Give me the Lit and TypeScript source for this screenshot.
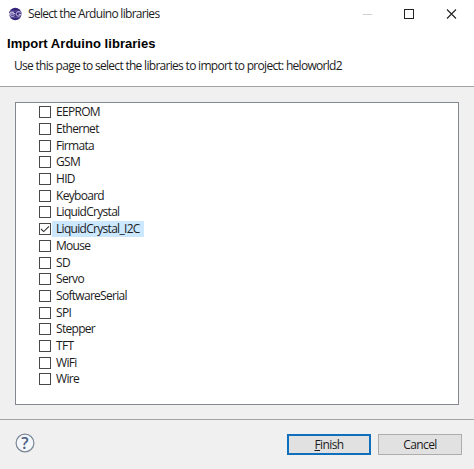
import { LitElement, css, html, svg } from 'lit';
import { customElement, property, state } from 'lit/decorators.js';
import { classMap } from 'lit/directives/class-map.js';

const LIBRARIES = [
  'EEPROM',
  'Ethernet',
  'Firmata',
  'GSM',
  'HID',
  'Keyboard',
  'LiquidCrystal',
  'LiquidCrystal_I2C',
  'Mouse',
  'SD',
  'Servo',
  'SoftwareSerial',
  'SPI',
  'Stepper',
  'TFT',
  'WiFi',
  'Wire',
];

@customElement('library-row')
export class LibraryRowEl extends LitElement {
  @property() name = '';

  @property({ type: Boolean }) checked = false;

  static override styles = css`
    :host {
      display: flex;
      align-items: center;
      height: 16.7px;
    }
    .box {
      box-sizing: border-box;
      flex: none;
      width: 12px;
      height: 12px;
      border: 1px solid #484848;
      background: #fff;
    }
    svg {
      display: block;
      width: 10px;
      height: 10px;
    }
    .name {
      height: 16px;
      margin-left: 1px;
      padding: 0 4px;
      line-height: 16px;
      white-space: nowrap;
    }
    .name.selected {
      background: #cce8ff;
    }
  `;

  override render() {
    return html`
      <span class="box">
        ${this.checked
          ? html`<svg viewBox="0 0 10 10">
              ${svg`<path d="M1 5 L3.7 7.6 L9 2.3" fill="none" stroke="#333" stroke-width="1.1" />`}
            </svg>`
          : ''}
      </span>
      <span class=${classMap({ name: true, selected: this.checked })}
        >${this.name}</span
      >
    `;
  }
}

@customElement('app-root')
export class AppRootEl extends LitElement {
  @state() private selected = 'LiquidCrystal_I2C';

  static override styles = css`
    :host {
      display: flex;
      flex-direction: column;
      box-sizing: border-box;
      width: 474px;
      height: 469px;
      overflow: hidden;
      background: #f0f0f0;
      color: #1c1c1c;
      font-family: 'Open Sans', 'Noto Sans', sans-serif;
      font-size: 12px;
      letter-spacing: -0.7px;
    }
    header {
      box-sizing: border-box;
      flex: none;
      height: 87px;
      background: #fff;
      border-bottom: 1px solid #a5a5a5;
    }
    .titlebar {
      display: flex;
      align-items: center;
      height: 28px;
      padding-left: 8px;
    }
    .logo {
      width: 14px;
      height: 14px;
    }
    .title {
      flex: 1;
      margin-left: 6px;
      line-height: 16px;
    }
    .controls {
      width: 114px;
      height: 28px;
    }
    h1 {
      margin: 8px 0 0 7px;
      font: bold 13px/16px 'Liberation Sans', Arial, sans-serif;
      letter-spacing: 0.04px;
      color: #000;
    }
    p {
      margin: 5px 0 0 14px;
      line-height: 18px;
    }
    .list {
      box-sizing: border-box;
      flex: none;
      height: 303px;
      margin: 15px 15px 14px;
      padding: 1px 0 0 23px;
      background: #fff;
      border: 1px solid #828790;
    }
    footer {
      display: flex;
      flex: 1;
      align-items: flex-start;
      padding: 14px 12px 0 15px;
      border-top: 1px solid #a5a5a5;
    }
    .help {
      width: 20px;
      height: 20px;
      margin: -1px auto 0 0;
    }
    .help text {
      font: 600 16px 'Open Sans', sans-serif;
      letter-spacing: 0;
    }
    button {
      box-sizing: border-box;
      width: 84px;
      height: 21px;
      margin-left: 7px;
      padding: 0;
      border: 1px solid #adadad;
      background: #e1e1e1;
      color: inherit;
      font: inherit;
      letter-spacing: -0.6px;
      line-height: 17px;
    }
    button.default {
      border: 2px solid #0f6fbd;
    }
  `;

  override render() {
    return html`
      <header>
        <div class="titlebar">
          <svg class="logo" viewBox="0 0 14 14">
            <circle cx="7.3" cy="7" r="6.2" fill="#35257a" />
            <path
              d="M2 4.2H12.6M2 10.2H12.6"
              stroke="#8d82bd"
              stroke-width=".6"
            />
            <path
              d="M6.6 8.6C5.6 9.7 1.5 9.6 1.5 7.1C1.5 4.5 6.4 4.5 6.4 7H2M12.8 5.4C11.6 4.4 8.1 4.5 8.1 7.1C8.1 9.6 12.6 9.7 12.8 7.3H10.6"
              fill="none"
              stroke="#e4def8"
              stroke-width="1"
            />
          </svg>
          <span class="title">Select the Arduino libraries</span>
          <svg class="controls" viewBox="0 0 114 28" fill="none">
            <path d="M3 14.5H12" stroke="#d0d0d0" />
            <rect x="44.5" y="9.5" width="9" height="9" stroke="#222" />
            <path
              d="M87 9.5L96 18.5M96 9.5L87 18.5"
              stroke="#222"
              stroke-width="1.1"
            />
          </svg>
        </div>
        <h1>Import Arduino libraries</h1>
        <p>Use this page to select the libraries to import to project: heloworld2</p>
      </header>
      <div class="list">
        ${LIBRARIES.map(
          (name) => html`
            <library-row
              .name=${name}
              .checked=${name === this.selected}
              @click=${() => (this.selected = name)}
            ></library-row>
          `,
        )}
      </div>
      <footer>
        <svg class="help" viewBox="0 0 20 20">
          <circle
            cx="10"
            cy="10"
            r="8.9"
            fill="#f4f7fb"
            stroke="#7c8795"
            stroke-width="1.2"
          />
          <text x="10" y="15.6" text-anchor="middle" fill="#4b6180">?</text>
        </svg>
        <button class="default"><u>F</u>inish</button>
        <button>Cancel</button>
      </footer>
    `;
  }
}

declare global {
  interface HTMLElementTagNameMap {
    'app-root': AppRootEl;
    'library-row': LibraryRowEl;
  }
}
